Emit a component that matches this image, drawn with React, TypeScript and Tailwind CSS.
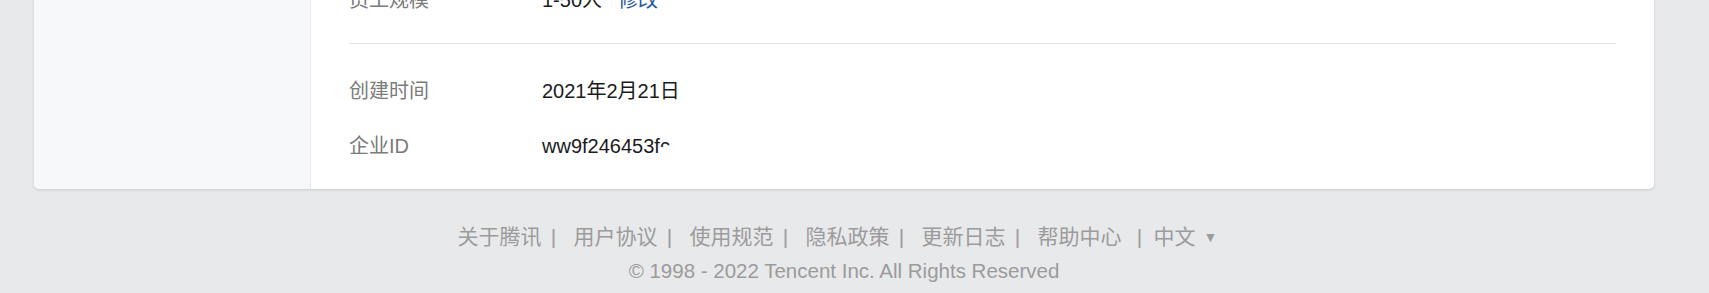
const font = { fontFamily: '"Liberation Sans", "Noto Sans CJK SC", sans-serif' };

const links = ["关于腾讯", "用户协议", "使用规范", "隐私政策", "更新日志"];

function InfoRow({ label, children }: { label: string; children: React.ReactNode }) {
  return (
    <div className="flex h-[55px] items-center text-[20px] leading-[24px]">
      <div className="w-[193px] shrink-0 text-[#7b7b7b]">{label}</div>
      <div className="text-[#1b1b1b]">{children}</div>
    </div>
  );
}

export default function App() {
  return (
    <div className="min-h-screen overflow-hidden bg-[#e8e9eb]" style={font}>
      <div className="ml-[34px] w-[1620px]">
        {/* card */}
        <div className="-mt-[28px] flex overflow-hidden rounded-b-[5px] bg-white shadow-[0_1px_3px_rgba(0,0,0,0.13)]">
          <div className="w-[277px] shrink-0 border-r border-dotted border-[#d5dbe4] bg-[#f7f8fa]" />
          <div className="flex-1 px-[38px]">
            <div className="border-b border-[#e3e3e3] pb-[16px]">
              <InfoRow label="员工规模">
                <span>1-50人</span>
                <span className="ml-[16px] cursor-pointer text-[#24579e]">修改</span>
              </InfoRow>
            </div>
            <div className="pb-[16px] pt-[19px]">
              <InfoRow label="创建时间">2021年2月21日</InfoRow>
              <InfoRow label="企业ID">
                <span className="flex items-start">
                  ww9f246453f
                  <span className="inline-block h-[13px] overflow-hidden">c</span>
                </span>
              </InfoRow>
            </div>
          </div>
        </div>

        {/* footer */}
        <div className="mt-[33px] flex flex-col items-center text-[#9b9b9b]">
          <div className="flex h-[30px] items-center pr-[13px] text-[21px]">
            {links.map((l) => (
              <span key={l} className="flex items-center">
                <a className="cursor-pointer">{l}</a>
                <span className="ml-[9px] mr-[17px] inline-block w-[6px] text-center">|</span>
              </span>
            ))}
            <a className="cursor-pointer">帮助中心</a>
            <span className="ml-[15px] mr-[11px] inline-block w-[6px] text-center">|</span>
            <span className="flex cursor-pointer items-center">
              中文
              <span className="ml-[8px] text-[14px]">▼</span>
            </span>
          </div>
          <div className="mt-[4px] text-[20.5px] leading-[30px]">© 1998 - 2022 Tencent Inc. All Rights Reserved</div>
        </div>
      </div>
    </div>
  );
}
